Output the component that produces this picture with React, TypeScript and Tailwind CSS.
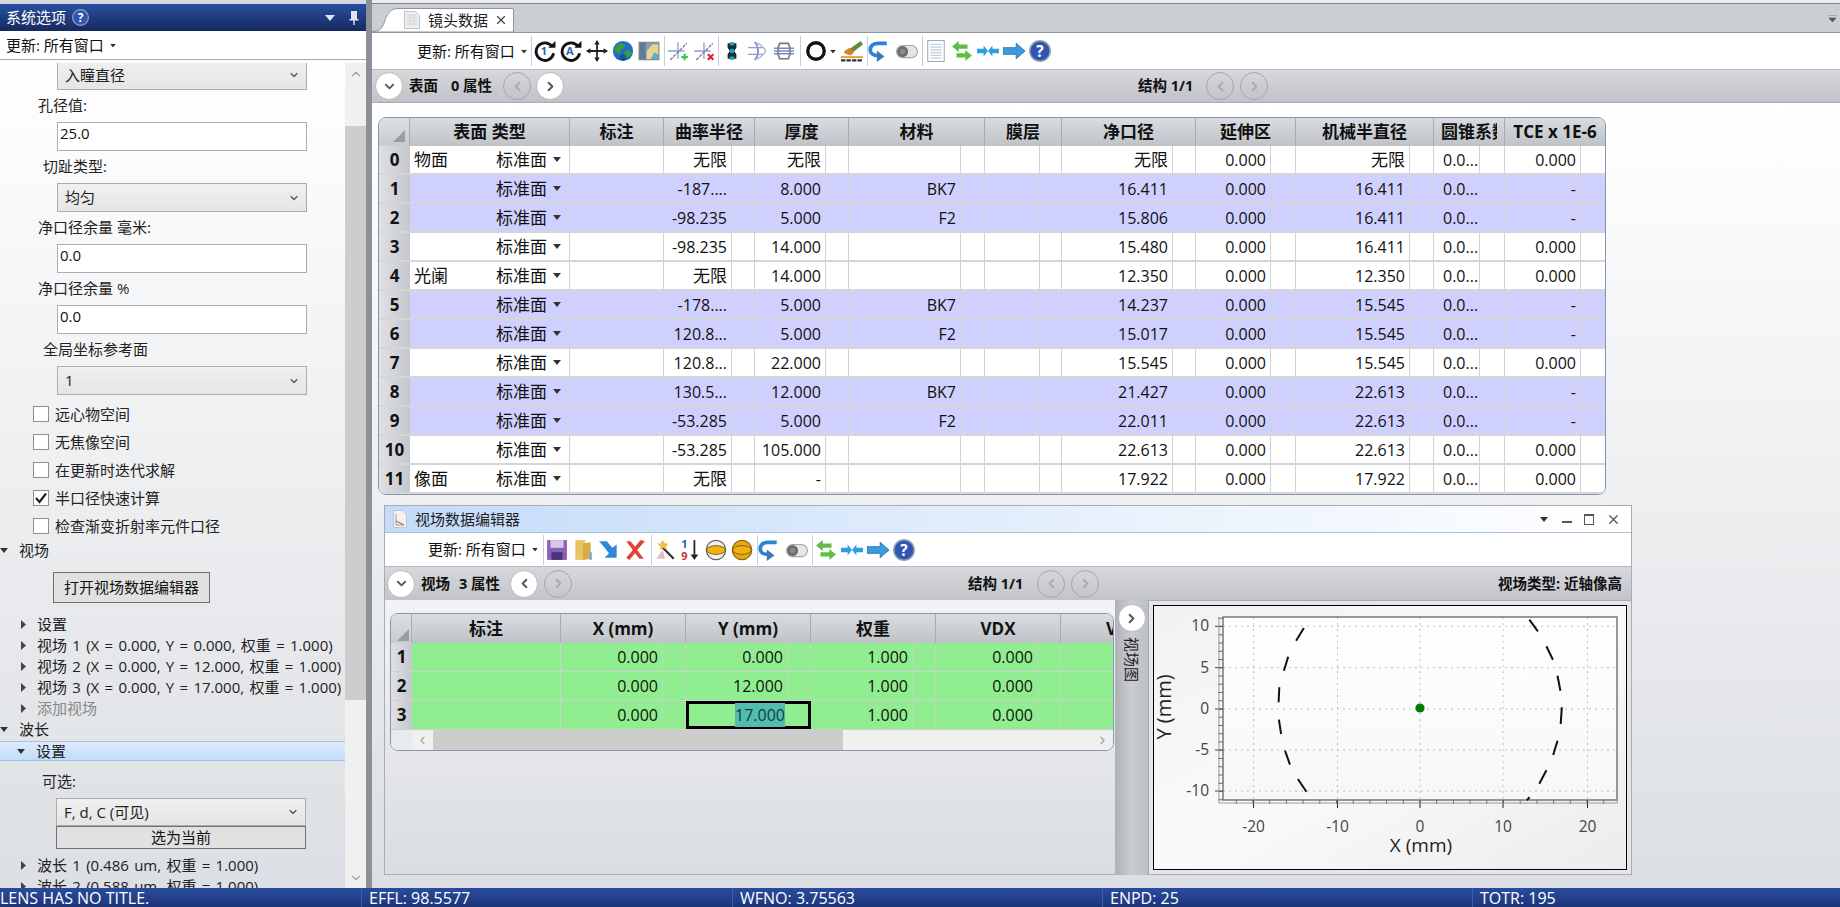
import { ReactNode } from "react";
import { ChevronDown, ChevronLeft, ChevronRight, ChevronUp, X } from "lucide-react";

const Down = ({ className = "" }: { className?: string }) => (
  <svg width="8" height="5" viewBox="0 0 8 5" className={`shrink-0 ${className}`}>
    <path d="M0 0H8L4 5Z" fill="#333" />
  </svg>
);
const Right = () => (
  <svg width="5" height="9" viewBox="0 0 5 9" className="shrink-0">
    <path d="M0 0L5 4.5L0 9Z" fill="#444" />
  </svg>
);

function Ico({ children }: { children: ReactNode }) {
  return (
    <svg width="22" height="22" viewBox="0 0 20 20">
      {children}
    </svg>
  );
}

const Refresh = ({ t }: { t: string }) => (
  <Ico>
    <path d="M16.5 6A8 8 0 1 0 17.8 12" fill="none" stroke="#111" strokeWidth="2.6" />
    <path d="M13 7H19.5V1Z" fill="#111" />
    <text x="9" y="14" textAnchor="middle" fontSize="10" fontWeight="700" fill="#2a62c0">
      {t}
    </text>
  </Ico>
);
const MoveIco = () => (
  <Ico>
    <path d="M10 1V19M1 10H19" stroke="#222" strokeWidth="1.6" />
    <path d="M10 0L7.5 4H12.5ZM10 20L7.5 16H12.5ZM0 10L4 7.5V12.5ZM20 10L16 7.5V12.5Z" fill="#222" />
  </Ico>
);
const GlobeIco = () => (
  <Ico>
    <circle cx="10" cy="10" r="9.2" fill="#1f6fc4" />
    <path d="M4 5C7 2 11 3 12 5C12 8 8 7 8 10C8 13 5 13 3 10C2 8 3 6 4 5ZM12 10C15 9 18 10 18 12C17 15 14 17 12 16C11 14 11 11 12 10Z" fill="#3f9a3c" />
    <circle cx="10" cy="16" r="3" fill="#0d3f86" opacity=".6" />
  </Ico>
);
const MapIco = () => (
  <Ico>
    <rect x="1" y="2" width="18" height="16" fill="#8d9db0" />
    <path d="M1 2H7V18H1Z" fill="#5f7d97" />
    <path d="M8 10L13 4H19V12L13 18H8Z" fill="#e4d88d" />
    <path d="M11 18L15 11L19 14V18Z" fill="#6fa8cf" />
    <path d="M1 2H19V18H1Z" fill="none" stroke="#7b8794" strokeWidth="1" />
  </Ico>
);
const CrossIco = ({ add }: { add: boolean }) => (
  <Ico>
    <path d="M1 10H16M10 2V17" stroke="#a9b3e6" strokeWidth="1.6" />
    <path d="M3 18L18 3" stroke="#777" strokeWidth="1.2" strokeDasharray="3 1" />
    {add ? (
      <path d="M13 15.5H19M16 12.5V18.5" stroke="#43c74a" strokeWidth="2" />
    ) : (
      <path d="M13.5 13L18.5 18M18.5 13L13.5 18" stroke="#e02222" strokeWidth="2" />
    )}
  </Ico>
);
const GearIco = () => (
  <Ico>
    <path d="M6 3H14V7L12 10L14 13V17H6V13L8 10L6 7Z" fill="#1b2a33" />
    <path d="M8 2H12V5H8ZM8 15H12V18H8Z" fill="#14a3b8" />
    <circle cx="10" cy="10" r="2.2" fill="#14a3b8" />
  </Ico>
);
const LensIco = () => (
  <Ico>
    <path d="M7 2C11 6 11 14 7 18" fill="none" stroke="#7d8ec9" strokeWidth="1.6" />
    <path d="M7 2C13 4 16 8 17 10C16 12 13 16 7 18" fill="none" stroke="#a4aeda" strokeWidth="1.2" />
    <path d="M1 7H14M1 13H14" stroke="#8e9ad0" strokeWidth="1.2" />
  </Ico>
);
const RingLensIco = () => (
  <Ico>
    <path d="M6 3C4 7 4 13 6 17H14C16 13 16 7 14 3Z" fill="none" stroke="#777" strokeWidth="1.5" />
    <path d="M1 7.5H19M1 10H19M1 12.5H19" stroke="#7a86cc" strokeWidth="1.2" />
  </Ico>
);
const RingIco = () => (
  <Ico>
    <circle cx="10" cy="10" r="7.5" fill="none" stroke="#111" strokeWidth="3" />
  </Ico>
);
const BrushIco = () => (
  <Ico>
    <path d="M18 1L20 4L11 11L8 8Z" fill="#5c8f3c" />
    <path d="M8 7L12 11L9 14L3 12L3 10Z" fill="#d9822b" />
    <path d="M0 15.5H20" stroke="#d9a02b" strokeWidth="1.6" />
    <path d="M0 18.5H20" stroke="#333" strokeWidth="2" strokeDasharray="4 1" />
  </Ico>
);
const UndoIco = () => (
  <Ico>
    <path d="M17 3H9C4 3 2 6 2 9C2 12 5 14 9 14" fill="none" stroke="#2a83d3" strokeWidth="3.4" />
    <path d="M8 9.5L15 15L8 20Z" fill="#3f79b8" />
  </Ico>
);
const ToggleIco = () => (
  <Ico>
    <rect x="0.5" y="5" width="19" height="11" rx="5.5" fill="#e6e6e6" stroke="#a5a5a5" />
    <circle cx="6" cy="10.5" r="5" fill="#6c6c6c" />
    <circle cx="6" cy="10.5" r="2.5" fill="#8a8a8a" />
  </Ico>
);
const DocIco = () => (
  <Ico>
    <rect x="2.5" y="0.5" width="15" height="19" fill="#fff" stroke="#a7adb5" />
    <path d="M5 4H15M5 6.5H15M5 9H15M5 11.5H15M5 14H15M5 16.5H15" stroke="#bcd0e6" strokeWidth="1.2" />
  </Ico>
);
const SwapIco = () => (
  <Ico>
    <path d="M1 6L7 1V4H15V8H7V11Z" fill="#63b84a" />
    <path d="M19 14L13 9V12H5V16H13V19Z" fill="#59c33f" />
  </Ico>
);
const SmallArrowsIco = () => (
  <Ico>
    <path d="M0 8H6V5L10 10L6 15V12H0Z" fill="#2d9fe0" />
    <path d="M20 8H14V5L10 10L14 15V12H20Z" fill="#2d9fe0" />
  </Ico>
);
const ArrowIco = () => (
  <Ico>
    <path d="M0 7H12V3L20 10L12 17V13H0Z" fill="#3a9be0" stroke="#2a6fa8" strokeWidth=".8" />
  </Ico>
);
const HelpIco = ({ size = 22 }: { size?: number }) => (
  <svg width={size} height={size} viewBox="0 0 20 20">
    <circle cx="10" cy="10" r="9.3" fill="#2f55b5" stroke="#9aa3ad" strokeWidth="1.4" />
    <text x="10" y="15" textAnchor="middle" fontSize="14" fontWeight="700" fill="#fff">
      ?
    </text>
  </svg>
);
const SaveIco = () => (
  <Ico>
    <path d="M1 1H19V19H1Z" fill="#8b5fb5" />
    <rect x="4" y="1" width="12" height="7" fill="#d6c9e6" />
    <rect x="5" y="12" width="10" height="7" fill="#4d3275" />
  </Ico>
);
const FolderIco = () => (
  <Ico>
    <path d="M3 1H12V19H3Z" fill="#e8c466" />
    <path d="M10 4L17 3V18L10 19Z" fill="#d8ac3f" />
    <rect x="16" y="12" width="2" height="7" fill="#6fa8dc" />
  </Ico>
);
const DropIco = () => (
  <Ico>
    <path d="M1 2L8 2L13 8L17 5V17H6L10 13L6 8Z" fill="#2e89d8" />
  </Ico>
);
const DelIco = () => (
  <Ico>
    <path d="M2 2H6L10 7L15 1L19 2L12 10L18 18H14L10 13L5 19L2 17L8 10Z" fill="#e0453a" />
  </Ico>
);
const WandIco = () => (
  <Ico>
    <path d="M8 8L18 18" stroke="#333" strokeWidth="2" />
    <path d="M2 18L8 10L10 18Z" fill="#e8b8b8" />
    <path d="M8 1L10 4L13 4L11 7L12 10L8 8L5 10L6 7L3 4L6 4Z" fill="#f0c040" />
  </Ico>
);
const SortIco = () => (
  <Ico>
    <text x="5" y="8.5" textAnchor="middle" fontSize="10" fontWeight="700" fill="#2a5fb0">
      1
    </text>
    <text x="5" y="19" textAnchor="middle" fontSize="10" fontWeight="700" fill="#d0302a">
      9
    </text>
    <path d="M14 1V16" stroke="#222" strokeWidth="1.6" />
    <path d="M10.5 14H17.5L14 19Z" fill="#222" />
  </Ico>
);
const EllipseIco = ({ full }: { full: boolean }) => (
  <Ico>
    <circle cx="10" cy="10" r="8.8" fill={full ? "#e9a90f" : "#f3f3f3"} stroke={full ? "#8a6a10" : "#666"} strokeWidth="1.2" />
    <ellipse cx="10" cy="10" rx="8.5" ry="4" fill="#efb20e" stroke="#6f5a1a" strokeWidth=".8" />
  </Ico>
);

const Sep = ({ className = "" }: { className?: string }) => (
  <div className={`h-[30px] w-px shrink-0 bg-[#c3cfe0] ${className}`} />
);

function Slot({ children, className = "w-[26px]" }: { children: ReactNode; className?: string }) {
  return <div className={`flex h-[30px] shrink-0 items-center justify-center ${className}`}>{children}</div>;
}

function UpdateLabel({ className }: { className: string }) {
  return (
    <div className={`flex shrink-0 items-center gap-[5px] text-[15px] text-[#111] ${className}`}>
      <span>更新: 所有窗口</span>
      <Down className="scale-75" />
    </div>
  );
}

function NavBtn({ dir, on }: { dir: "l" | "r" | "d"; on: boolean }) {
  const cls = on ? "border-[#b9bbc0] bg-white text-[#555]" : "border-[#a5a7ac] text-[#a9abb0]";
  return (
    <div className={`flex h-7 w-7 shrink-0 items-center justify-center rounded-full border ${cls}`}>
      {dir === "d" && <ChevronDown size={15} strokeWidth={3} />}
      {dir === "l" && <ChevronLeft size={15} strokeWidth={3} />}
      {dir === "r" && <ChevronRight size={15} strokeWidth={3} />}
    </div>
  );
}

function PanelSelect({ text, className = "ml-[57px] h-[29px]" }: { text: string; className?: string }) {
  return (
    <div className={`flex w-[250px] shrink-0 items-center justify-between border border-[#acacac] bg-gradient-to-b from-[#f0f0f0] to-[#e5e5e5] pl-[7px] pr-[6px] text-[15px] text-[#222] ${className}`}>
      <span>{text}</span>
      <ChevronDown size={12} strokeWidth={2.5} className="text-[#555]" />
    </div>
  );
}

function PanelInput({ text }: { text: string }) {
  return (
    <div className="ml-[57px] flex h-[29px] w-[250px] shrink-0 items-start border border-[#abadb3] bg-white pl-[2px] text-[15px] leading-[20px] text-[#111]">
      {text}
    </div>
  );
}

function PanelLabel({ text, className = "pl-[38px]" }: { text: string; className?: string }) {
  return <div className={`flex h-[32px] shrink-0 items-center pb-[2px] text-[15px] text-[#222] ${className}`}>{text}</div>;
}

function Check({ text, on = false }: { text: string; on?: boolean }) {
  return (
    <div className="flex h-[28px] shrink-0 items-center gap-[6px] pl-[33px] text-[15px] text-[#222]">
      <div className="flex h-[16px] w-[16px] items-center justify-center border border-[#8e8f8f] bg-white">
        {on && (
          <svg width="12" height="12" viewBox="0 0 12 12">
            <path d="M1 6L4.5 10L11 1.5" fill="none" stroke="#222" strokeWidth="2.2" />
          </svg>
        )}
      </div>
      <span>{text}</span>
    </div>
  );
}

function TreeItem({ text, grey = false }: { text: string; grey?: boolean }) {
  return (
    <div className={`flex h-[21px] shrink-0 items-center gap-[11px] whitespace-nowrap pl-[21px] text-[15px] [word-spacing:1.4px] ${grey ? "text-[#888]" : "text-[#222]"}`}>
      <Right />
      <span>{text}</span>
    </div>
  );
}

function SidePanel() {
  return (
    <div className="flex w-[366px] shrink-0 flex-col">
      <div className="h-[4px] shrink-0 bg-[#d5d8dc]" />
      <div className="flex h-[27px] shrink-0 items-center bg-gradient-to-b from-[#2a50a2] to-[#15295f] pl-[6px] pr-[7px] text-[15px] text-white">
        <span>系统选项</span>
        <div className="ml-[6px]">
          <HelpIco size={17} />
        </div>
        <svg width="10" height="6" viewBox="0 0 10 6" className="ml-auto">
          <path d="M0 0H10L5 6Z" fill="#dfe5f2" />
        </svg>
        <svg width="10" height="15" viewBox="0 0 10 15" className="ml-[14px]">
          <path d="M2 1H8V9H9.5V10.5H5.7V15H4.3V10.5H.5V9H2Z" fill="#dfe5f2" />
        </svg>
      </div>
      <div className="flex h-[29px] shrink-0 items-center border-b border-[#a9a9a9] bg-white pl-[6px] text-[15px] text-[#111]">
        <span>更新: 所有窗口</span>
        <Down className="ml-[5px] scale-75" />
      </div>
      <div className="flex min-h-0 flex-1 bg-gradient-to-b from-white to-[#dcdfe3] pt-[3px]">
        <div className="flex min-w-0 flex-1 flex-col overflow-hidden">
          <PanelSelect text="入瞳直径" className="-mt-[2px] ml-[57px] h-[29px] border-t-0" />
          <PanelLabel text="孔径值:" />
          <PanelInput text="25.0" />
          <PanelLabel text="切趾类型:" className="pl-[43px]" />
          <PanelSelect text="均匀" />
          <PanelLabel text="净口径余量 毫米:" />
          <PanelInput text="0.0" />
          <PanelLabel text="净口径余量 %" />
          <PanelInput text="0.0" />
          <PanelLabel text="全局坐标参考面" className="pl-[43px]" />
          <PanelSelect text="1" />
          <div className="h-[5px] shrink-0" />
          <Check text="远心物空间" />
          <Check text="无焦像空间" />
          <Check text="在更新时迭代求解" />
          <Check text="半口径快速计算" on />
          <Check text="检查渐变折射率元件口径" />
          <div className="flex h-[20px] shrink-0 items-center gap-[11px] text-[15px] text-[#222]">
            <Down />
            <span>视场</span>
          </div>
          <div className="ml-[53px] mt-[12px] flex h-[31px] w-[157px] shrink-0 items-center justify-center border border-[#707070] bg-[#e1e1e1] text-[15px] text-[#111]">
            打开视场数据编辑器
          </div>
          <div className="h-[11px] shrink-0" />
          <TreeItem text="设置" />
          <TreeItem text="视场 1 (X = 0.000, Y = 0.000, 权重 = 1.000)" />
          <TreeItem text="视场 2 (X = 0.000, Y = 12.000, 权重 = 1.000)" />
          <TreeItem text="视场 3 (X = 0.000, Y = 17.000, 权重 = 1.000)" />
          <TreeItem text="添加视场" grey />
          <div className="flex h-[21px] shrink-0 items-center gap-[11px] text-[15px] text-[#222]">
            <Down />
            <span>波长</span>
          </div>
          <div className="mt-px flex h-[20px] shrink-0 items-center gap-[11px] border-y border-[#a6c4df] bg-gradient-to-b from-[#dcebfc] to-[#c1dcfb] pl-[17px] text-[15px] text-[#222]">
            <Down />
            <span>设置</span>
          </div>
          <div className="flex h-[37px] shrink-0 items-center pl-[42px] pt-[3px] text-[15px] text-[#222]">可选:</div>
          <PanelSelect text="F, d, C (可见)" className="ml-[56px] h-[28px]" />
          <div className="ml-[56px] flex h-[23px] w-[250px] shrink-0 items-center justify-center border border-[#707070] bg-[#e1e1e1] text-[15px] text-[#111]">
            选为当前
          </div>
          <div className="h-[6px] shrink-0" />
          <TreeItem text="波长 1 (0.486 um, 权重 = 1.000)" />
          <TreeItem text="波长 2 (0.588 um, 权重 = 1.000)" />
        </div>
        <div className="flex w-[21px] shrink-0 flex-col bg-[#f0f0f0] text-[#a0a0a0]">
          <div className="flex h-[21px] items-center justify-center">
            <ChevronUp size={14} />
          </div>
          <div className="mt-[42px] h-[574px] bg-[#cdcdcd]" />
          <div className="mt-auto flex h-[21px] items-center justify-center">
            <ChevronDown size={14} />
          </div>
        </div>
      </div>
    </div>
  );
}

const LENS_ROWS = [
  { c: "物面", r: "无限", t: "无限", m: "", a: "无限", h: "无限", k: "0.000", tint: false },
  { c: "", r: "-187....", t: "8.000", m: "BK7", a: "16.411", h: "16.411", k: "-", tint: true },
  { c: "", r: "-98.235", t: "5.000", m: "F2", a: "15.806", h: "16.411", k: "-", tint: true },
  { c: "", r: "-98.235", t: "14.000", m: "", a: "15.480", h: "16.411", k: "0.000", tint: false },
  { c: "光阑", r: "无限", t: "14.000", m: "", a: "12.350", h: "12.350", k: "0.000", tint: false },
  { c: "", r: "-178....", t: "5.000", m: "BK7", a: "14.237", h: "15.545", k: "-", tint: true },
  { c: "", r: "120.8...", t: "5.000", m: "F2", a: "15.017", h: "15.545", k: "-", tint: true },
  { c: "", r: "120.8...", t: "22.000", m: "", a: "15.545", h: "15.545", k: "0.000", tint: false },
  { c: "", r: "130.5...", t: "12.000", m: "BK7", a: "21.427", h: "22.613", k: "-", tint: true },
  { c: "", r: "-53.285", t: "5.000", m: "F2", a: "22.011", h: "22.613", k: "-", tint: true },
  { c: "", r: "-53.285", t: "105.000", m: "", a: "22.613", h: "22.613", k: "0.000", tint: false },
  { c: "像面", r: "无限", t: "-", m: "", a: "17.922", h: "17.922", k: "0.000", tint: false },
];

function HeadCell({ text, className }: { text: ReactNode; className: string }) {
  return (
    <div className={`flex h-full shrink-0 items-center justify-center overflow-hidden whitespace-nowrap border-r border-[#a9acb2] text-[17px] font-bold text-[#111] ${className}`}>
      {text}
    </div>
  );
}

function Val({ text, main, side, sideline = "border-[#d2d2d2]" }: { text?: string; main: string; side: string; sideline?: string }) {
  const cjk = text === "无限";
  return (
    <>
      <div className={`flex h-full shrink-0 items-center justify-end overflow-hidden whitespace-nowrap border-r pr-[4px] text-[#111] ${cjk ? "text-[17px]" : "text-[16px]"} ${sideline} ${main}`}>
        {text}
      </div>
      <div className={`h-full shrink-0 border-r ${sideline} ${side}`} />
    </>
  );
}

function Corner({ className }: { className: string }) {
  return (
    <div className={`flex h-full shrink-0 items-end justify-end border-r border-[#a9acb2] bg-gradient-to-b from-[#dcdfe3] to-[#c8cbd0] ${className}`}>
      <svg width="12" height="12" viewBox="0 0 12 12">
        <path d="M12 0V12H0Z" fill="#9a9da2" />
      </svg>
    </div>
  );
}

function RowNum({ n, className }: { n: number; className: string }) {
  return (
    <div className={`flex h-full shrink-0 items-center justify-center bg-gradient-to-r from-[#dfe1e5] to-[#c4c7cc] text-[17px] font-bold text-[#111] ${className}`}>
      {n}
    </div>
  );
}

function LensTable() {
  return (
    <div className="ml-[6px] mt-[14px] w-[1228px] overflow-hidden rounded-[8px] border border-[#8497b0] bg-white">
      <div className="flex h-[28px] bg-gradient-to-b from-[#d9dce0] to-[#bfc2c7]">
        <Corner className="w-[31px] p-[4px]" />
        <HeadCell text="表面 类型" className="w-[160px]" />
        <HeadCell text="标注" className="w-[94px]" />
        <HeadCell text="曲率半径" className="w-[91px]" />
        <HeadCell text="厚度" className="w-[94px]" />
        <HeadCell text="材料" className="w-[136px]" />
        <HeadCell text="膜层" className="w-[77px]" />
        <HeadCell text="净口径" className="w-[134px]" />
        <HeadCell text="延伸区" className="w-[100px]" />
        <HeadCell text="机械半直径" className="w-[138px]" />
        <HeadCell text={<span className="w-[56px] overflow-hidden">圆锥系数</span>} className="w-[71px]" />
        <HeadCell text="TCE x 1E-6" className="w-[100px] border-r-0" />
      </div>
      {LENS_ROWS.map((row, i) => (
        <div key={i} className={`flex h-[29px] border-b-2 border-[#d6d6d6] ${row.tint ? "bg-[#d0d0ff]" : "bg-white"}`}>
          <RowNum n={i} className="w-[31px]" />
          <div className="flex h-full w-[160px] shrink-0 items-center border-r border-[#d2d2d2] pl-[4px] text-[17px] text-[#111]">
            <span className="w-[82px]">{row.c}</span>
            <span>标准面</span>
            <Down className="ml-[6px]" />
          </div>
          <div className="h-full w-[94px] shrink-0 border-r border-[#d2d2d2]" />
          <Val text={row.r} main="w-[68px]" side="w-[23px]" />
          <Val text={row.t} main="w-[71px]" side="w-[23px]" />
          <Val text={row.m} main="w-[112px]" side="w-[24px]" />
          <Val main="w-[55px]" side="w-[22px]" />
          <Val text={row.a} main="w-[111px]" side="w-[23px]" />
          <Val text="0.000" main="w-[75px]" side="w-[25px]" />
          <Val text={row.h} main="w-[114px]" side="w-[24px]" />
          <div className="flex h-full w-[46px] shrink-0 items-center border-r border-[#d2d2d2] pl-[9px] text-[16px] text-[#111]">0.0...</div>
          <div className="h-full w-[25px] shrink-0 border-r border-[#d2d2d2]" />
          <Val text={row.k} main="w-[76px]" side="w-[24px] border-r-0" />
        </div>
      ))}
    </div>
  );
}

const FIELD_ROWS = ["0.000", "12.000", "17.000"];

function FieldTable() {
  return (
    <div className="ml-[5px] mt-[13px] w-[724px] overflow-hidden rounded-[8px] border border-[#8497b0] bg-white">
      <div className="flex h-[29px] bg-gradient-to-b from-[#d9dce0] to-[#bfc2c7]">
        <Corner className="w-[21px] p-[2px]" />
        <HeadCell text="标注" className="w-[149px]" />
        <HeadCell text="X (mm)" className="w-[125px]" />
        <HeadCell text="Y (mm)" className="w-[125px]" />
        <HeadCell text="权重" className="w-[125px]" />
        <HeadCell text="VDX" className="w-[125px]" />
        <HeadCell text="VDY" className="w-[125px]" />
      </div>
      {FIELD_ROWS.map((y, i) => (
        <div key={y} className="flex h-[29px] border-b border-[#cfcfcf] bg-[#90ee90]">
          <RowNum n={i + 1} className="w-[21px]" />
          <div className="h-full w-[149px] shrink-0 border-r border-[#cfcfcf]" />
          <Val text="0.000" main="w-[102px]" side="w-[23px]" sideline="border-[#b6dcb6]" />
          {i === 2 ? (
            <div className="flex h-full w-[125px] shrink-0 items-center justify-end border-[3px] border-black pr-[23px] text-[16px] text-[#143c46]">
              <span className="bg-[#52bdad]">{y}</span>
            </div>
          ) : (
            <Val text={y} main="w-[102px]" side="w-[23px]" sideline="border-[#b6dcb6]" />
          )}
          <Val text="1.000" main="w-[102px]" side="w-[23px]" sideline="border-[#b6dcb6]" />
          <Val text="0.000" main="w-[102px]" side="w-[23px]" sideline="border-[#b6dcb6]" />
          <div className="h-full w-[125px] shrink-0" />
        </div>
      ))}
      <div className="flex h-[20px] bg-[#f0f0f0] text-[#a0a0a0]">
        <div className="w-[21px] shrink-0 bg-[#e8eaed]" />
        <div className="flex w-[21px] shrink-0 items-center justify-center">
          <ChevronLeft size={13} />
        </div>
        <div className="w-[410px] shrink-0 bg-[#cdcdcd]" />
        <div className="ml-auto flex w-[21px] items-center justify-center">
          <ChevronRight size={13} />
        </div>
      </div>
    </div>
  );
}

const DASHES = [
  [150.9, 23, 143.1, 35.7], [135.2, 51.7, 130.9, 65.7], [126.3, 82.3, 125.6, 97.3], [125.9, 114.7, 128.1, 129],
  [132, 145.7, 137, 159.7], [144.9, 174, 153.4, 186.7], [376.3, 14.7, 384.9, 26.3], [393.4, 41.3, 399.9, 54.7],
  [404.5, 70.7, 407.4, 85.7], [408.8, 102.3, 407.7, 119], [404.5, 135.7, 400.2, 150], [393.4, 165.3, 386.3, 178.7],
  [376.6, 192.3, 373.8, 195.3],
];

function FieldChart() {
  const xMajor = [[-20, 100.6], [-10, 184.5], [0, 267], [10, 350], [20, 434.5]];
  const yMajor = [[10, 21.3], [5, 62.7], [0, 104], [-5, 145], [-10, 186]];
  const xMinor = Array.from({ length: 24 }, (_, i) => 267 + (i - 12) * 16.7).filter((x) => x > 70 && x < 464);
  const yMinor = Array.from({ length: 23 }, (_, i) => 104 + (i - 11) * 8.25).filter((y) => y > 12 && y < 195);
  return (
    <div className="h-[265px] w-[474px] border border-black bg-gradient-to-br from-[#f2f2f2] via-[#fafafa] to-[#ececec]">
      <svg width="472" height="263" viewBox="1 1 472 263">
        <defs>
          <linearGradient id="plotbg" x1="0" y1="0" x2="0" y2="1">
            <stop offset="0" stopColor="#ffffff" />
            <stop offset="1" stopColor="#f7f7f7" />
          </linearGradient>
        </defs>
        <rect x="70" y="12" width="394" height="183" fill="url(#plotbg)" />
        {xMajor.map(([, x]) => (
          <line key={x} x1={x} x2={x} y1="12" y2="195" stroke="#bdbdbd" strokeDasharray="2 4" />
        ))}
        {yMajor.map(([, y]) => (
          <line key={y} x1="70" x2="464" y1={y} y2={y} stroke="#bdbdbd" strokeDasharray="2 4" />
        ))}
        {xMinor.map((x) => (
          <line key={x} x1={x} x2={x} y1="195" y2="199" stroke="#666" />
        ))}
        {yMinor.map((y) => (
          <line key={y} x1="65" x2="70" y1={y} y2={y} stroke="#666" />
        ))}
        {xMajor.map(([, x]) => (
          <line key={x} x1={x} x2={x} y1="195" y2="203" stroke="#222" />
        ))}
        {yMajor.map(([, y]) => (
          <line key={y} x1="62" x2="70" y1={y} y2={y} stroke="#444" />
        ))}
        <rect x="70" y="12" width="394" height="183" fill="none" stroke="#6e6e6e" strokeWidth="1.4" />
        <path d="M464.5 195.5V198H66V12" fill="none" stroke="#9a9a9a" strokeWidth="1" />
        {DASHES.map(([a, b, c, d]) => (
          <line key={a + b} x1={a} y1={b} x2={c} y2={d} stroke="#111" strokeWidth="2" />
        ))}
        <circle cx="267" cy="103" r="4.6" fill="#008000" />
        <g fontSize="15.5" fill="#444" fontFamily="'Open Sans', sans-serif">
          {xMajor.map(([v, x]) => (
            <text key={x} x={x} y="227" textAnchor="middle">
              {v}
            </text>
          ))}
          {yMajor.map(([v, y]) => (
            <text key={y} x="56" y={y + 5} textAnchor="end">
              {v}
            </text>
          ))}
        </g>
        <text x="268" y="247" textAnchor="middle" fontSize="19" fill="#222" fontFamily="'Open Sans', sans-serif">
          X (mm)
        </text>
        <text transform="translate(18 102) rotate(-90)" textAnchor="middle" fontSize="20" fill="#222" fontFamily="'Open Sans', sans-serif">
          Y (mm)
        </text>
      </svg>
    </div>
  );
}

function FieldWindow() {
  return (
    <div className="ml-[12px] mt-[10px] flex h-[370px] w-[1248px] flex-col border border-b-0 border-[#a9adb3] bg-[#dcdfe3]">
      <div className="flex h-[27px] shrink-0 items-center border-b border-[#a9c3dc] bg-gradient-to-r from-[#c3dbf9] via-[#e3eefc] to-white pl-[8px] pr-[10px] text-[15px] text-[#222]">
        <svg width="14" height="18" viewBox="0 0 14 18">
          <path d="M.5.5H9.5L13.5 4.5V17.5H.5Z" fill="#f1f1f1" stroke="#c4c4c4" />
          <path d="M3 11L11 15" stroke="#c95a5a" strokeWidth="1.2" />
          <path d="M3 4V15H11" fill="none" stroke="#9a9a9a" />
        </svg>
        <span className="ml-[8px]">视场数据编辑器</span>
        <Down className="ml-auto" />
        <div className="ml-[14px] h-[2px] w-[10px] translate-y-[3px] bg-[#555]" />
        <div className="ml-[12px] h-[11px] w-[10px] border border-t-2 border-[#555]" />
        <X size={15} strokeWidth={2} className="ml-[12px] text-[#555]" />
      </div>
      <div className="flex h-[34px] shrink-0 items-center border-b border-[#b6b8bc] bg-white">
        <UpdateLabel className="w-[158px] pl-[43px]" />
        <Sep />
        <Slot><SaveIco /></Slot>
        <Slot><FolderIco /></Slot>
        <Slot><DropIco /></Slot>
        <Slot><DelIco /></Slot>
        <Sep className="ml-[3px]" />
        <Slot className="w-[25px]"><WandIco /></Slot>
        <Slot className="w-[25px]"><SortIco /></Slot>
        <Slot className="ml-px w-[26px]"><EllipseIco full={false} /></Slot>
        <Slot><EllipseIco full /></Slot>
        <Sep className="ml-[2px]" />
        <Slot className="w-[22px]"><UndoIco /></Slot>
        <Slot className="ml-[4px] w-[26px]"><ToggleIco /></Slot>
        <Sep className="ml-[2px]" />
        <Slot><SwapIco /></Slot>
        <Slot><SmallArrowsIco /></Slot>
        <Slot><ArrowIco /></Slot>
        <Slot><HelpIco /></Slot>
      </div>
      <div className="flex h-[33px] shrink-0 items-center bg-gradient-to-b from-[#d6d8dc] to-[#c2c4c9] pl-[2px] pr-[9px] text-[14.5px] font-bold text-[#111]">
        <NavBtn dir="d" on />
        <span className="ml-[6px]">视场</span>
        <span className="ml-[9px]">3 属性</span>
        <div className="ml-[10px]"><NavBtn dir="l" on /></div>
        <div className="ml-[6px]"><NavBtn dir="r" on={false} /></div>
        <span className="ml-[396px]">结构 1/1</span>
        <div className="ml-[14px]"><NavBtn dir="l" on={false} /></div>
        <div className="ml-[6px]"><NavBtn dir="r" on={false} /></div>
        <span className="ml-auto">视场类型: 近轴像高</span>
      </div>
      <div className="flex min-h-0 flex-1">
        <div className="w-[730px] shrink-0 border-b border-[#a9adb3] bg-gradient-to-b from-[#f2f3f5] to-[#dadde1]">
          <FieldTable />
        </div>
        <div className="flex w-[33px] shrink-0 flex-col items-center bg-gradient-to-r from-[#aeb1b6] via-[#c9ccd1] to-[#bcbfc4] pt-[4px]">
          <NavBtn dir="r" on />
          <span className="mt-[5px] text-[15px] text-[#222] [text-orientation:sideways] [writing-mode:vertical-rl]">视场图</span>
        </div>
        <div className="flex-1 border border-[#a9adb3] bg-[#e4e6e9] p-[4px] pb-0">
          <FieldChart />
        </div>
      </div>
    </div>
  );
}

function MainArea() {
  return (
    <div className="flex min-w-0 flex-1 flex-col">
      <div className="h-[4px] shrink-0 border-b border-[#7e858f] bg-[#eceef0]" />
      <div className="flex h-[29px] shrink-0 items-end border-b border-[#8f949c] bg-[#cbced3]">
        <div className="relative h-[24px] w-[142px]">
          <svg width="142" height="24" viewBox="0 0 142 24" className="absolute inset-0">
            <path d="M0 23.5C8 23.5 10 20 12 15C15 6 18 .5 26 .5H140Q141.5 .5 141.5 2V24H0Z" fill="#fff" stroke="#8f949c" />
          </svg>
          <div className="relative flex h-full items-center pl-[32px] text-[15px] text-[#222]">
            <svg width="16" height="18" viewBox="0 0 16 18">
              <path d="M.5.5H11L15.5 5V17.5H.5Z" fill="#eeeeee" stroke="#c4c4c4" />
              <path d="M3 4H12M3 7H13M3 10H13M3 13H13M6 4V15M10 4V15" stroke="#d3d3d3" />
            </svg>
            <span className="ml-[8px]">镜头数据</span>
            <X size={14} strokeWidth={2} className="ml-[6px] text-[#444]" />
          </div>
        </div>
        <svg width="9" height="8" viewBox="0 0 9 8" className="mb-[9px] ml-auto mr-[3px]">
          <path d="M0 0H9M1 3H8L4.5 7Z" fill="#555" stroke="#555" strokeWidth=".6" />
        </svg>
      </div>
      <div className="flex h-[37px] shrink-0 items-center border-b border-[#b6b8bc] bg-white">
        <UpdateLabel className="w-[159px] pl-[45px]" />
        <Sep />
        <Slot><Refresh t="1" /></Slot>
        <Slot><Refresh t="A" /></Slot>
        <Slot><MoveIco /></Slot>
        <Slot><GlobeIco /></Slot>
        <Slot><MapIco /></Slot>
        <Sep className="ml-[2px]" />
        <Slot><CrossIco add /></Slot>
        <Slot><CrossIco add={false} /></Slot>
        <Sep className="ml-px" />
        <Slot><GearIco /></Slot>
        <Slot><LensIco /></Slot>
        <Slot><RingLensIco /></Slot>
        <Sep className="ml-[3px]" />
        <Slot className="ml-[2px] w-[26px]"><RingIco /></Slot>
        <Down className="scale-75" />
        <Slot className="ml-[2px] w-[26px]"><BrushIco /></Slot>
        <Sep className="ml-[2px]" />
        <Slot className="w-[22px]"><UndoIco /></Slot>
        <Slot className="ml-[4px] w-[26px]"><ToggleIco /></Slot>
        <Sep className="ml-[2px]" />
        <Slot><DocIco /></Slot>
        <Slot><SwapIco /></Slot>
        <Slot><SmallArrowsIco /></Slot>
        <Slot><ArrowIco /></Slot>
        <Slot><HelpIco /></Slot>
      </div>
      <div className="flex h-[33px] shrink-0 items-center border-b border-[#a8abb0] bg-gradient-to-b from-[#d6d8dc] to-[#c0c2c7] pl-[3px] text-[14.5px] font-bold text-[#111]">
        <NavBtn dir="d" on />
        <span className="ml-[6px]">表面</span>
        <span className="ml-[13px]">0 属性</span>
        <div className="ml-[11px]"><NavBtn dir="l" on={false} /></div>
        <div className="ml-[5px]"><NavBtn dir="r" on /></div>
        <span className="ml-[574px]">结构 1/1</span>
        <div className="ml-[13px]"><NavBtn dir="l" on={false} /></div>
        <div className="ml-[6px]"><NavBtn dir="r" on={false} /></div>
      </div>
      <div className="min-h-0 flex-1 bg-gradient-to-b from-white to-[#dcdfe3]">
        <LensTable />
        <FieldWindow />
      </div>
    </div>
  );
}

function StatusBar() {
  const cell = "flex h-full shrink-0 items-center border-r border-[#3f5ea8]";
  return (
    <div className="flex h-[19px] shrink-0 bg-gradient-to-b from-[#2a4c9e] to-[#1c3579] text-[16px] text-white">
      <div className={`${cell} w-[362px]`}>LENS HAS NO TITLE.</div>
      <div className={`${cell} w-[371px] pl-[7px]`}>EFFL: 98.5577</div>
      <div className={`${cell} w-[370px] pl-[7px]`}>WFNO: 3.75563</div>
      <div className={`${cell} w-[370px] pl-[7px]`}>ENPD: 25</div>
      <div className="flex h-full items-center pl-[7px]">TOTR: 195</div>
    </div>
  );
}

export default function App() {
  return (
    <div className="flex h-[907px] w-[1840px] flex-col overflow-hidden font-['Open_Sans','Noto_Sans_CJK_SC',sans-serif]">
      <div className="flex min-h-0 flex-1">
        <SidePanel />
        <div className="w-[6px] shrink-0 bg-[#8b9099]" />
        <MainArea />
      </div>
      <StatusBar />
    </div>
  );
}
